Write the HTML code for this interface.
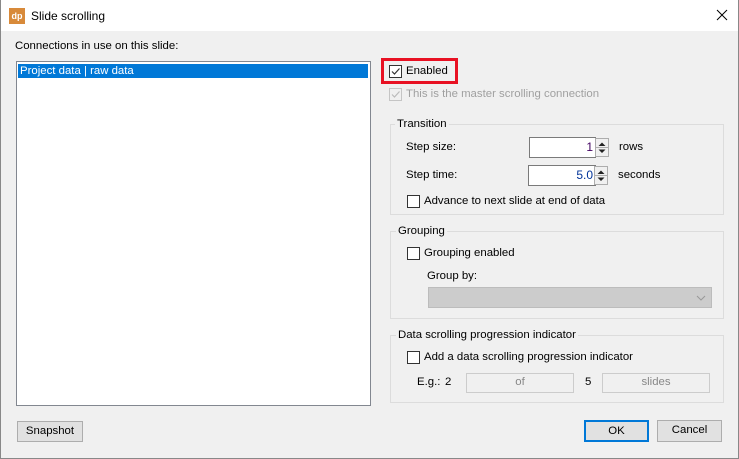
<!DOCTYPE html>
<html><head><style>
*{margin:0;padding:0;box-sizing:border-box}
body{width:739px;height:459px;background:#f0f0f0;font-family:"Liberation Sans",sans-serif;font-size:11.4px;color:#000;position:relative;overflow:hidden}
.a{position:absolute;white-space:nowrap}
.t{line-height:14px}
.cb{position:absolute;width:13px;height:13px;border:1px solid #333;background:#fff}
.grp{position:absolute;border:1px solid #dcdcdc}
.gl{position:absolute;background:#f0f0f0;padding:0 2px;line-height:14px}
.in{position:absolute;background:#fff;border:1px solid #7a7a7a;text-align:right;line-height:18px;padding-right:2px;font-size:12px}
.sp{position:absolute;width:14px;border:1px solid #adadad;background:#f0f0f0}
.btn{position:absolute;border:1px solid #adadad;background:#e1e1e1;text-align:center;line-height:19px}
.dis{position:absolute;border:1px solid #ccc;background:#f0f0f0;color:#888;text-align:center;line-height:17px}
</style></head><body>
<div class="a" style="left:0;top:0;width:739px;height:31px;background:#fff"></div>
<div class="a" style="left:0;top:0;width:1px;height:459px;background:#888"></div>
<div class="a" style="left:738px;top:0;width:1px;height:459px;background:#888"></div>
<div class="a" style="left:0;top:458px;width:739px;height:1px;background:#888"></div>
<div class="a" style="left:9px;top:8px;width:16px;height:16px;background:#d88a3a;color:#fff;font-size:9px;font-weight:bold;line-height:16px;text-align:center">dp</div>
<div class="a t" style="left:31px;top:9px;font-size:12px">Slide scrolling</div>
<svg class="a" style="left:716px;top:9px" width="12" height="12"><path d="M1 1L11 11M11 1L1 11" stroke="#000" stroke-width="1"/></svg>

<div class="a t" style="left:15px;top:39px">Connections in use on this slide:</div>
<div class="a" style="left:16px;top:61px;width:355px;height:345px;background:#fff;border:1px solid #828790"></div>
<div class="a t" style="left:18px;top:64px;width:350px;height:14px;background:#0078d7;color:#fff;padding-left:2px">Project data | raw data</div>

<div class="a" style="left:381px;top:58px;width:77px;height:26px;border:3px solid #e81123"></div>
<div class="cb" style="left:389px;top:65px"></div>
<svg class="a" style="left:390px;top:66px" width="11" height="11"><path d="M2 5.5L4.5 8L9.5 2.5" stroke="#333" fill="none" stroke-width="1.2"/></svg>
<div class="a t" style="left:406px;top:64px">Enabled</div>
<div class="cb" style="left:389px;top:88px;border-color:#c5c5c5;background:#f0f0f0"></div>
<svg class="a" style="left:390px;top:89px" width="11" height="11"><path d="M2 5.5L4.5 8L9.5 2.5" stroke="#bbb" fill="none" stroke-width="1.2"/></svg>
<div class="a t" style="left:406px;top:87px;color:#a0a0a0">This is the master scrolling connection</div>

<div class="grp" style="left:390px;top:124px;width:334px;height:91px"></div>
<div class="gl" style="left:395px;top:117px">Transition</div>
<div class="a t" style="left:406px;top:140px">Step size:</div>
<div class="in" style="left:529px;top:137px;width:67px;height:21px;color:#400060">1</div>
<div class="sp" style="left:595px;top:138px;height:19px"><svg width="12" height="17"><path d="M2.5 7L6 3.5L9.5 7Z M2.5 10.5L6 14L9.5 10.5Z" fill="#222"/><path d="M0 8.5H12" stroke="#adadad"/></svg></div>
<div class="a t" style="left:619px;top:140px">rows</div>
<div class="a t" style="left:406px;top:168px">Step time:</div>
<div class="in" style="left:528px;top:165px;width:68px;height:21px;color:#003399">5.0</div>
<div class="sp" style="left:594px;top:166px;height:19px"><svg width="12" height="17"><path d="M2.5 7L6 3.5L9.5 7Z M2.5 10.5L6 14L9.5 10.5Z" fill="#222"/><path d="M0 8.5H12" stroke="#adadad"/></svg></div>
<div class="a t" style="left:618px;top:168px">seconds</div>
<div class="cb" style="left:407px;top:195px"></div>
<div class="a t" style="left:424px;top:194px">Advance to next slide at end of data</div>

<div class="grp" style="left:390px;top:231px;width:334px;height:88px"></div>
<div class="gl" style="left:396px;top:224px">Grouping</div>
<div class="cb" style="left:407px;top:247px"></div>
<div class="a t" style="left:424px;top:246px">Grouping enabled</div>
<div class="a t" style="left:427px;top:269px">Group by:</div>
<div class="a" style="left:428px;top:287px;width:284px;height:21px;background:#ccc;border:1px solid #bcbcbc"></div>
<svg class="a" style="left:696px;top:294px" width="10" height="8"><path d="M1 2L5 6L9 2" stroke="#999" fill="none"/></svg>

<div class="grp" style="left:390px;top:335px;width:334px;height:68px"></div>
<div class="gl" style="left:396px;top:328px">Data scrolling progression indicator</div>
<div class="cb" style="left:407px;top:351px"></div>
<div class="a t" style="left:424px;top:350px">Add a data scrolling progression indicator</div>
<div class="a t" style="left:417px;top:375px">E.g.:</div>
<div class="a t" style="left:445px;top:375px">2</div>
<div class="dis" style="left:466px;top:373px;width:108px;height:20px">of</div>
<div class="a t" style="left:585px;top:375px">5</div>
<div class="dis" style="left:602px;top:373px;width:108px;height:20px">slides</div>

<div class="btn" style="left:17px;top:421px;width:66px;height:21px">Snapshot</div>
<div class="btn" style="left:584px;top:420px;width:65px;height:22px;border:2px solid #0078d7;line-height:18px">OK</div>
<div class="btn" style="left:657px;top:420px;width:65px;height:22px">Cancel</div>
</body></html>
